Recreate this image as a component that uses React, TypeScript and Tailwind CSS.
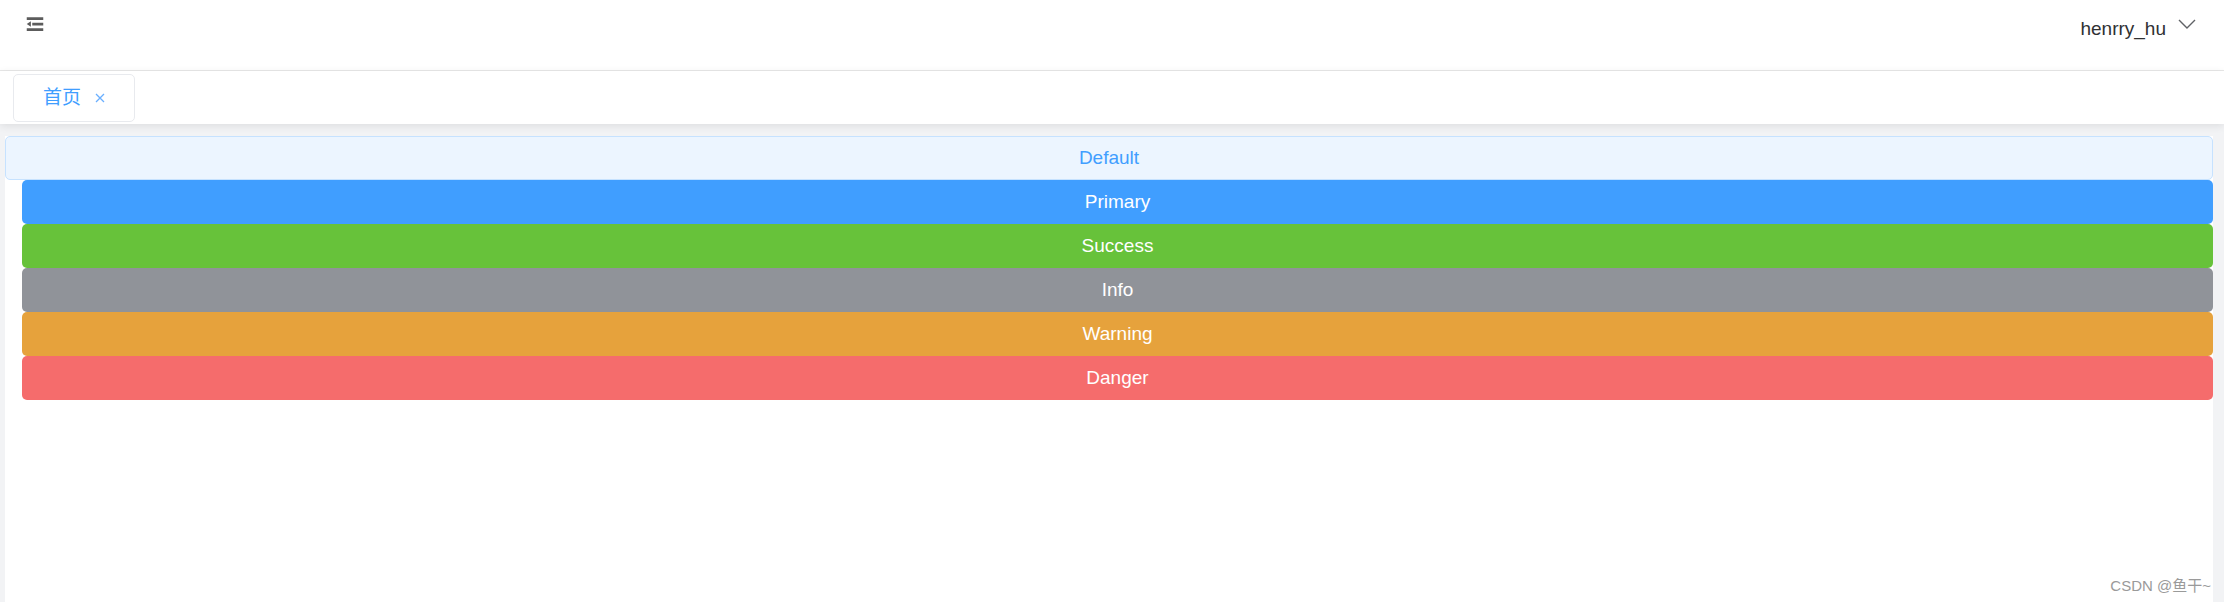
import React from "react";

const font = "font-['Liberation_Sans','Noto_Sans_CJK_SC',sans-serif]";

const buttons = [
  { label: "Primary", cls: "bg-[#409eff]" },
  { label: "Success", cls: "bg-[#67c23a]" },
  { label: "Info", cls: "bg-[#909399]" },
  { label: "Warning", cls: "bg-[#e6a23c]" },
  { label: "Danger", cls: "bg-[#f56c6c]" },
];

function FoldIcon() {
  return (
    <svg viewBox="0 0 1024 1024" className="w-[22px] h-[22px] text-[#5c5c5c]">
      <path
        fill="currentColor"
        d="M896 192H128v128h768zm0 256H384v128h512zm0 256H128v128h768zM320 384 128 512l192 128z"
      />
    </svg>
  );
}

export default function App() {
  return (
    <div className={`relative w-full h-[602px] flex flex-col overflow-hidden bg-[#f2f3f5] ${font}`}>
      {/* header */}
      <header className="h-[71px] shrink-0 bg-white border-b border-[#e8e8e8] flex justify-between">
        <div className="pl-[24px] pt-[13px]">
          <FoldIcon />
        </div>
        <div className="flex items-start pr-[28px]">
          <span className="pt-[18px] text-[19px] leading-[22px] text-[#303133]">henrry_hu</span>
          <svg viewBox="0 0 18 10" className="ml-[12px] mt-[19px] w-[18px] h-[10px]">
            <polyline points="1,1 9,9 17,1" fill="none" stroke="#606266" strokeWidth="1.4" />
          </svg>
        </div>
      </header>

      {/* tabs */}
      <div className="h-[53px] shrink-0 bg-white relative z-10 shadow-[0_2px_8px_rgba(0,0,0,0.09)] px-[13px] pt-[3px]">
        <div className="w-[122px] h-[48px] border border-[#e8eaee] rounded-[5px] flex items-center pl-[29px] text-[#409eff]">
          <span className="text-[19px] leading-[22px]">首页</span>
          <svg viewBox="0 0 10 10" className="ml-[14px] w-[10px] h-[10px]">
            <path d="M1 1L9 9M9 1L1 9" stroke="#6aafff" strokeWidth="1.3" fill="none" />
          </svg>
        </div>
      </div>

      {/* main */}
      <main className="flex-1 pt-[12px] pl-[5px] pr-[11px] flex">
        <div className="flex-1 bg-white flex flex-col">
          <button className="h-[44px] w-full rounded-[5px] border border-[#c6e2ff] bg-[#ecf5ff] text-[#409eff] text-[19px]">
            Default
          </button>
          {buttons.map((b) => (
            <button
              key={b.label}
              className={`h-[44px] ml-[17px] rounded-[5px] text-white text-[19px] ${b.cls}`}
            >
              {b.label}
            </button>
          ))}
        </div>
      </main>

      <span className="absolute right-[13px] bottom-[8px] text-[15px] leading-[16px] text-[#9a9a9a]">
        CSDN @鱼干~
      </span>
    </div>
  );
}
